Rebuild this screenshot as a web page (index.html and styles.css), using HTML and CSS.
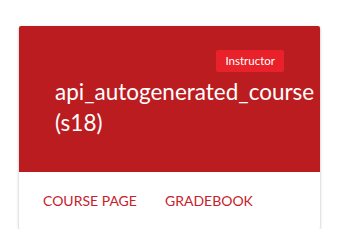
FILE: index.html
```html
<!DOCTYPE html>
<html>
<head>
<meta charset="utf-8">
<link rel="stylesheet" href="styles.css">
</head>
<body>
<div class="card">
  <div class="card-header">
    <div class="badge-row"><span class="badge">Instructor</span></div>
    <div class="title">api_autogenerated_course (s18)</div>
  </div>
  <div class="card-footer">
    <a class="link">COURSE PAGE</a>
    <a class="link">GRADEBOOK</a>
  </div>
</div>
</body>
</html>
```
FILE: styles.css
```css
html, body {
  margin: 0;
  padding: 0;
  background: #ffffff;
}
body {
  padding: 26px 0 0 19px;
  font-family: Lato, "Open Sans", sans-serif;
}
.card {
  width: 301px;
  box-shadow: 0 1px 3px rgba(0,0,0,0.3);
  border-radius: 2px;
  overflow: hidden;
}
.card-header {
  background: #bb1c1f;
  height: 146px;
  box-sizing: border-box;
  padding: 24px 36px 0 36px;
  color: #ffffff;
}
.badge-row {
  display: flex;
  justify-content: flex-end;
}
.badge {
  background: #e8212a;
  color: #ffffff;
  font-size: 11.5px;
  height: 22px;
  line-height: 22px;
  padding: 0 9px;
  border-radius: 2px;
}
.title {
  font-size: 22.5px;
  line-height: 31px;
  font-weight: 400;
  letter-spacing: 0;
  margin-top: 4px;
  margin-right: -36px;
}
.card-footer {
  height: 57px;
  display: flex;
  align-items: center;
  gap: 28px;
  padding: 0 24px;
  background: #fff;
}
.link {
  color: #c8202a;
  font-size: 14px;
}
```
